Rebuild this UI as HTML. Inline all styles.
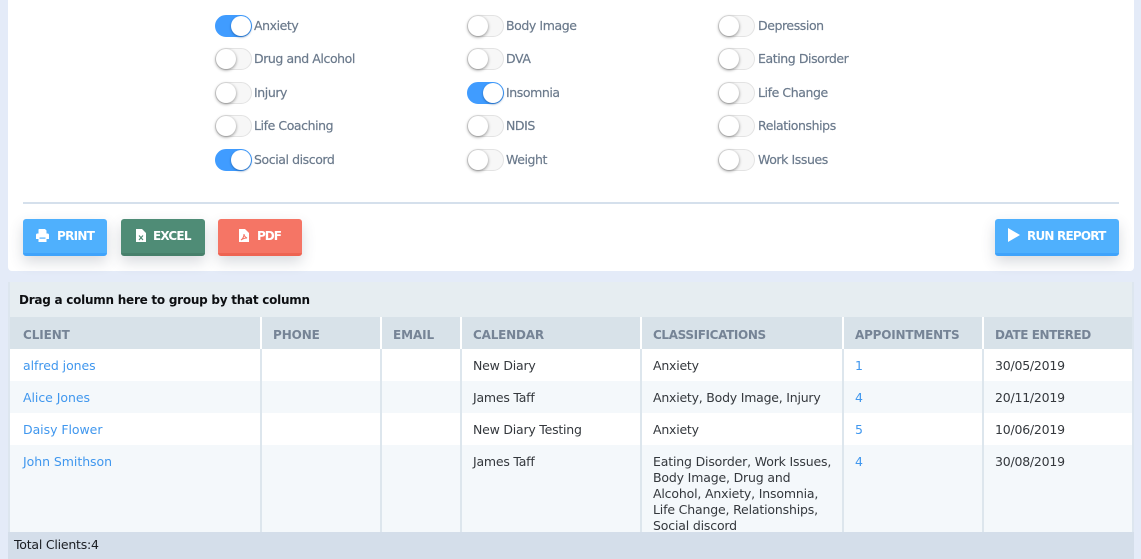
<!DOCTYPE html>
<html><head><meta charset="utf-8"><style>
*{box-sizing:border-box}
html,body{margin:0;padding:0;width:1141px;height:559px;overflow:hidden;background:#e4ebf8;font-family:"DejaVu Sans",sans-serif}
.a{position:absolute}
.t{position:absolute;white-space:nowrap;font-size:12.5px;line-height:16px;color:#34383d;letter-spacing:-.22px}
.card{position:absolute;left:8px;top:0;width:1126px;height:271px;background:#fff;border-radius:0 0 4px 4px}
.sw{position:absolute;width:37px;height:22px;border-radius:11px;background:#f7f7f7;border:1px solid #e3e3e3}
.sw i{position:absolute;left:0;top:0;width:20px;height:20px;border-radius:50%;background:#fff;box-shadow:0 1px 3px rgba(0,0,0,.45)}
.sw.on{background:#409cff;border-color:#409cff}
.sw.on i{left:15px;box-shadow:0 1px 2px rgba(20,80,150,.7)}
.l{position:absolute;white-space:nowrap;font-size:12.5px;line-height:16px;color:#6b7a8c;letter-spacing:-.42px;-webkit-text-stroke:.2px #6b7a8c}
.b{position:absolute;top:219px;height:37px;border-radius:3px;color:#fff;box-shadow:0 6px 14px rgba(60,70,90,.2)}
.b span{position:absolute;top:9px;font-size:12px;line-height:16px;font-weight:bold;white-space:nowrap;letter-spacing:-.7px}
.b svg{position:absolute}
.h{position:absolute;top:327px;white-space:nowrap;font-size:12px;line-height:16px;font-weight:bold;color:#768496;letter-spacing:-.1px}
.t.lnk{color:#4097ee;letter-spacing:-.05px}
</style></head><body>
<div class="card"></div>

<div class="sw on" style="left:215px;top:15px"><i></i></div><div class="l" style="left:254px;top:18px">Anxiety</div>
<div class="sw" style="left:215px;top:48px"><i></i></div><div class="l" style="left:254px;top:51px">Drug and Alcohol</div>
<div class="sw" style="left:215px;top:82px"><i></i></div><div class="l" style="left:254px;top:85px">Injury</div>
<div class="sw" style="left:215px;top:115px"><i></i></div><div class="l" style="left:254px;top:118px">Life Coaching</div>
<div class="sw on" style="left:215px;top:149px"><i></i></div><div class="l" style="left:254px;top:152px">Social discord</div>

<div class="sw" style="left:467px;top:15px"><i></i></div><div class="l" style="left:506px;top:18px">Body Image</div>
<div class="sw" style="left:467px;top:48px"><i></i></div><div class="l" style="left:506px;top:51px">DVA</div>
<div class="sw on" style="left:467px;top:82px"><i></i></div><div class="l" style="left:506px;top:85px">Insomnia</div>
<div class="sw" style="left:467px;top:115px"><i></i></div><div class="l" style="left:506px;top:118px">NDIS</div>
<div class="sw" style="left:467px;top:149px"><i></i></div><div class="l" style="left:506px;top:152px">Weight</div>

<div class="sw" style="left:718px;top:15px"><i></i></div><div class="l" style="left:758px;top:18px">Depression</div>
<div class="sw" style="left:718px;top:48px"><i></i></div><div class="l" style="left:758px;top:51px">Eating Disorder</div>
<div class="sw" style="left:718px;top:82px"><i></i></div><div class="l" style="left:758px;top:85px">Life Change</div>
<div class="sw" style="left:718px;top:115px"><i></i></div><div class="l" style="left:758px;top:118px">Relationships</div>
<div class="sw" style="left:718px;top:149px"><i></i></div><div class="l" style="left:758px;top:152px">Work Issues</div>

<div class="a" style="left:23px;top:202px;width:1096px;height:2px;background:#d5e0ec"></div>

<div class="b" style="left:23px;width:84px;background:#4fb0fd;border-bottom:3px solid #3fa3fb">
<svg style="left:13px;top:10px" width="13" height="13" viewBox="0 0 13 13"><path fill="#fff" d="M3 0h6l1.500 1.500V4.500H2.500V.5zM1.500 4.500h10A1.500 1.500 0 0 1 13 6v4h-2.500v3h-8v-3H0V6A1.500 1.500 0 0 1 1.500 4.500z"/><rect x="3.500" y="8.500" width="6" height="1.200" fill="#4fb0fd"/></svg>
<span style="left:34px">PRINT</span></div>

<div class="b" style="left:121px;width:84px;background:#4f8c76;border-bottom:3px solid #47806b">
<svg style="left:15px;top:10px" width="10" height="13" viewBox="0 0 10 13"><path fill="#fff" d="M0 0h6l4 4v9H0z"/><path stroke="#4f8c76" stroke-width="1.200" fill="none" d="M3 6.500l4 4.500M7 6.500l-4 4.500"/></svg>
<span style="left:32px;letter-spacing:-.8px">EXCEL</span></div>

<div class="b" style="left:218px;width:84px;background:#f57565;border-bottom:3px solid #ee6452">
<svg style="left:21px;top:10px" width="10" height="13" viewBox="0 0 10 13"><path fill="#fff" d="M0 0h6l4 4v9H0z"/><path stroke="#f57565" stroke-width="1" fill="none" d="M2 11c2-1 3-4 3-6 0 2 1 3 3 4-2 0-4 .5-6 2z"/></svg>
<span style="left:39px;letter-spacing:-1px">PDF</span></div>

<div class="b" style="left:995px;width:124px;background:#4fb0fd;border-bottom:3px solid #3fa3fb">
<svg style="left:13px;top:9px" width="12" height="14" viewBox="0 0 12 14"><path fill="#fff" d="M0 0l12 7-12 7z"/></svg>
<span style="left:32px;letter-spacing:-.8px">RUN REPORT</span></div>

<!-- grid -->
<div class="a" style="left:8px;top:282px;width:1126px;height:277px;background:#dde6ef"></div>
<div class="a" style="left:10px;top:282px;width:1122px;height:35px;background:#e6edf1"></div>
<div class="t" style="left:19px;top:292px;font-size:12px;font-weight:bold;color:#0d0f12;letter-spacing:-.25px">Drag a column here to group by that column</div>

<div class="a" style="left:10px;top:317px;width:1122px;height:32px;background:#d8e2e9"></div>
<div class="a" style="left:10px;top:349px;width:1122px;height:32px;background:#fff"></div>
<div class="a" style="left:10px;top:381px;width:1122px;height:32px;background:#f4f8fb"></div>
<div class="a" style="left:10px;top:413px;width:1122px;height:32px;background:#fff"></div>
<div class="a" style="left:10px;top:445px;width:1122px;height:87px;background:#f4f8fb"></div>

<div class="a" style="left:260px;top:317px;width:2px;height:32px;background:#fff"></div>
<div class="a" style="left:380px;top:317px;width:2px;height:32px;background:#fff"></div>
<div class="a" style="left:460px;top:317px;width:2px;height:32px;background:#fff"></div>
<div class="a" style="left:640px;top:317px;width:2px;height:32px;background:#fff"></div>
<div class="a" style="left:842px;top:317px;width:2px;height:32px;background:#fff"></div>
<div class="a" style="left:982px;top:317px;width:2px;height:32px;background:#fff"></div>
<div class="a" style="left:260px;top:349px;width:2px;height:183px;background:#dde6ed"></div>
<div class="a" style="left:380px;top:349px;width:2px;height:183px;background:#dde6ed"></div>
<div class="a" style="left:460px;top:349px;width:2px;height:183px;background:#dde6ed"></div>
<div class="a" style="left:640px;top:349px;width:2px;height:183px;background:#dde6ed"></div>
<div class="a" style="left:842px;top:349px;width:2px;height:183px;background:#dde6ed"></div>
<div class="a" style="left:982px;top:349px;width:2px;height:183px;background:#dde6ed"></div>

<div class="h" style="left:23px">CLIENT</div>
<div class="h" style="left:273px">PHONE</div>
<div class="h" style="left:393px">EMAIL</div>
<div class="h" style="left:473px;letter-spacing:-.2px">CALENDAR</div>
<div class="h" style="left:653px;letter-spacing:-.37px">CLASSIFICATIONS</div>
<div class="h" style="left:855px;letter-spacing:-.2px">APPOINTMENTS</div>
<div class="h" style="left:995px;letter-spacing:-.43px">DATE ENTERED</div>

<div class="t lnk" style="left:23px;top:358px">alfred jones</div>
<div class="t" style="left:473px;top:358px">New Diary</div>
<div class="t" style="left:653px;top:358px">Anxiety</div>
<div class="t lnk" style="left:855px;top:358px">1</div>
<div class="t" style="left:995px;top:358px">30/05/2019</div>

<div class="t lnk" style="left:23px;top:390px">Alice Jones</div>
<div class="t" style="left:473px;top:390px">James Taff</div>
<div class="t" style="left:653px;top:390px">Anxiety, Body Image, Injury</div>
<div class="t lnk" style="left:855px;top:390px">4</div>
<div class="t" style="left:995px;top:390px">20/11/2019</div>

<div class="t lnk" style="left:23px;top:422px">Daisy Flower</div>
<div class="t" style="left:473px;top:422px">New Diary Testing</div>
<div class="t" style="left:653px;top:422px">Anxiety</div>
<div class="t lnk" style="left:855px;top:422px">5</div>
<div class="t" style="left:995px;top:422px">10/06/2019</div>

<div class="t lnk" style="left:23px;top:454px">John Smithson</div>
<div class="t" style="left:473px;top:454px">James Taff</div>
<div class="t" style="left:653px;top:454px;letter-spacing:-.17px">Eating Disorder, Work Issues,<br>Body Image, Drug and<br>Alcohol, Anxiety, Insomnia,<br>Life Change, Relationships,<br>Social discord</div>
<div class="t lnk" style="left:855px;top:454px">4</div>
<div class="t" style="left:995px;top:454px">30/08/2019</div>

<div class="a" style="left:8px;top:532px;width:1126px;height:27px;background:#d4deea"></div>
<div class="t" style="left:14px;top:537px;color:#1a1d22">Total Clients:4</div>
</body></html>
